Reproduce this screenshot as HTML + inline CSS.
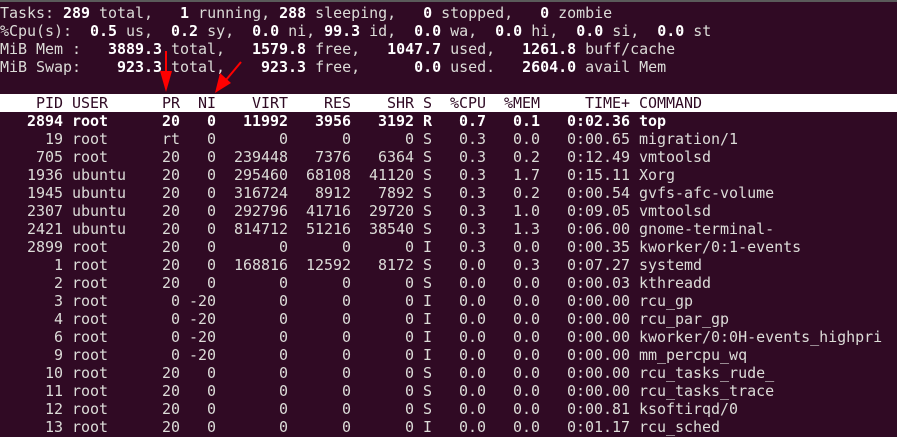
<!DOCTYPE html>
<html><head><meta charset="utf-8"><style>
html,body{margin:0;padding:0;background:#300a24;width:897px;height:437px;overflow:hidden}
.top{height:2px;background:#5a5a5a}
pre{margin:0;padding:2px 0 0 0;font-family:"DejaVu Sans Mono","Liberation Mono",monospace;font-size:15px;line-height:18px;color:#dcdcd8;letter-spacing:-0.03px}
b{color:#fff;font-weight:bold}
.h{display:block;background:#fff;color:#300a24;width:897px}
svg{position:absolute;left:0;top:0}
</style></head><body><div class="top"></div><pre>Tasks: <b>289</b> total,   <b>1</b> running, <b>288</b> sleeping,   <b>0</b> stopped,   <b>0</b> zombie
%Cpu(s):  <b>0.5</b> us,  <b>0.2</b> sy,  <b>0.0</b> ni, <b>99.3</b> id,  <b>0.0</b> wa,  <b>0.0</b> hi,  <b>0.0</b> si,  <b>0.0</b> st
MiB Mem :   <b>3889.3</b> total,   <b>1579.8</b> free,   <b>1047.7</b> used,   <b>1261.8</b> buff/cache
MiB Swap:    <b>923.3</b> total,    <b>923.3</b> free,      <b>0.0</b> used.   <b>2604.0</b> avail Mem

<span class="h">    PID USER      PR  NI    VIRT    RES    SHR S  %CPU  %MEM     TIME+ COMMAND</span><b>   2894 root      20   0   11992   3956   3192 R   0.7   0.1   0:02.36 top</b>
     19 root      rt   0       0      0      0 S   0.3   0.0   0:00.65 migration/1
    705 root      20   0  239448   7376   6364 S   0.3   0.2   0:12.49 vmtoolsd
   1936 ubuntu    20   0  295460  68108  41120 S   0.3   1.7   0:15.11 Xorg
   1945 ubuntu    20   0  316724   8912   7892 S   0.3   0.2   0:00.54 gvfs-afc-volume
   2307 ubuntu    20   0  292796  41716  29720 S   0.3   1.0   0:09.05 vmtoolsd
   2421 ubuntu    20   0  814712  51216  38540 S   0.3   1.3   0:06.00 gnome-terminal-
   2899 root      20   0       0      0      0 I   0.3   0.0   0:00.35 kworker/0:1-events
      1 root      20   0  168816  12592   8172 S   0.0   0.3   0:07.27 systemd
      2 root      20   0       0      0      0 S   0.0   0.0   0:00.03 kthreadd
      3 root       0 -20       0      0      0 I   0.0   0.0   0:00.00 rcu_gp
      4 root       0 -20       0      0      0 I   0.0   0.0   0:00.00 rcu_par_gp
      6 root       0 -20       0      0      0 I   0.0   0.0   0:00.00 kworker/0:0H-events_highpri
      9 root       0 -20       0      0      0 I   0.0   0.0   0:00.00 mm_percpu_wq
     10 root      20   0       0      0      0 S   0.0   0.0   0:00.00 rcu_tasks_rude_
     11 root      20   0       0      0      0 S   0.0   0.0   0:00.00 rcu_tasks_trace
     12 root      20   0       0      0      0 S   0.0   0.0   0:00.81 ksoftirqd/0
     13 root      20   0       0      0      0 I   0.0   0.0   0:01.17 rcu_sched</pre>
<svg width="897" height="437" viewBox="0 0 897 437">
<line x1="166" y1="51" x2="166" y2="74" stroke="#f00" stroke-width="2"/>
<polygon points="160,71 172,71 166,92" fill="#f00"/>
<line x1="241" y1="62" x2="226" y2="80" stroke="#f00" stroke-width="2"/>
<polygon points="220,73 231,83 215,93" fill="#f00"/>
</svg>
</body></html>
